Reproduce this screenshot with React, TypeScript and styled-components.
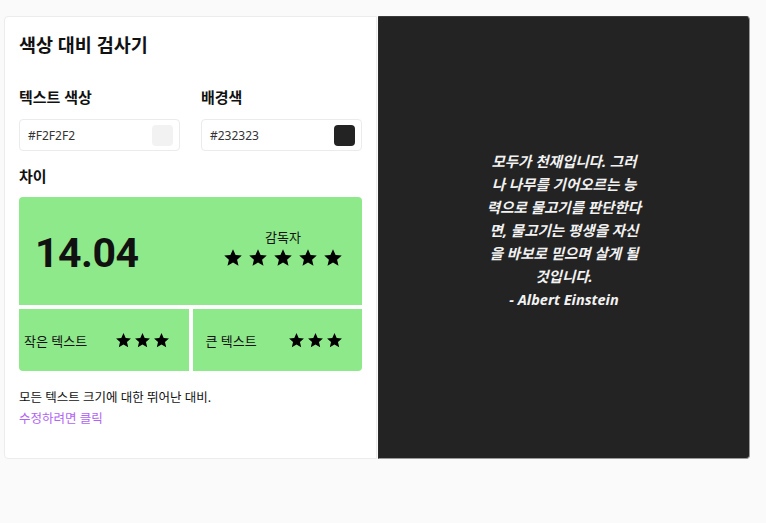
import styled, { createGlobalStyle } from "styled-components";

const GlobalStyle = createGlobalStyle`
  html, body {
    margin: 0;
    padding: 0;
    background: #fafafa;
    font-family: "Noto Sans", "Noto Sans CJK KR", sans-serif;
    color: #111;
  }
`;

const Page = styled.div`
  display: flex;
  padding: 16px 16px 0 4px;
  height: 443px;
`;

const Panel = styled.div`
  width: 373px;
  box-sizing: border-box;
  background: #fff;
  border: 1px solid #ececec;
  border-radius: 4px 0 0 4px;
  padding: 14px 14px 0 14px;
  display: flex;
  flex-direction: column;
`;

const Title = styled.h1`
  margin: 0;
  font-size: 18.5px;
  font-weight: 700;
  line-height: 28px;
`;

const Fields = styled.div`
  display: grid;
  grid-template-columns: 1fr 1fr;
  column-gap: 21px;
  margin-top: 28px;
`;

const Field = styled.div`
  display: flex;
  flex-direction: column;
`;

const Label = styled.div`
  font-size: 15px;
  font-weight: 600;
  line-height: 20px;
  margin-bottom: 12px;
`;

const InputBox = styled.div`
  height: 32px;
  box-sizing: border-box;
  border: 1px solid #ebebeb;
  border-radius: 4px;
  display: flex;
  align-items: center;
  justify-content: space-between;
  padding: 0 6px 0 8px;
  font-size: 12px;
  color: #333;
`;

const Swatch = styled.div<{ $color: string }>`
  width: 21px;
  height: 21px;
  border-radius: 4px;
  background: ${(p) => p.$color};
`;

const SectionLabel = styled(Label)`
  margin: 15px 0 11px;
`;

const Result = styled.div`
  display: grid;
  grid-template-columns: 1fr 1fr;
  gap: 4px;
  border-radius: 4px;
  overflow: hidden;
`;

const Cell = styled.div<{ $wide?: boolean }>`
  background: #8ee98b;
  display: flex;
  align-items: center;
  justify-content: space-between;
  grid-column: ${(p) => (p.$wide ? "1 / span 2" : "auto")};
  height: ${(p) => (p.$wide ? "108px" : "62px")};
  padding: ${(p) => (p.$wide ? "0 19px 0 16px" : "0 19px 0 5px")};
  box-sizing: border-box;
`;

const Ratio = styled.div`
  font-family: Roboto, "Noto Sans", sans-serif;
  font-size: 41px;
  font-weight: 700;
  letter-spacing: -0.5px;
  margin-top: 4px;
`;

const Grade = styled.div`
  display: flex;
  flex-direction: column;
  align-items: center;
  gap: 2px;
  margin-top: -8px;
  font-size: 13px;
`;

const Small = styled.span<{ $indent?: number }>`
  font-size: 13px;
  margin-left: ${(p) => p.$indent ?? 0}px;
`;

const Stars = styled.div<{ $gap: number }>`
  display: flex;
  gap: ${(p) => p.$gap}px;
`;

const Note = styled.div`
  margin-top: 16px;
  font-size: 12.5px;
  line-height: 22px;
`;

const Link = styled.div`
  font-size: 12.5px;
  color: #b163f5;
  line-height: 20px;
  cursor: pointer;
`;

const Preview = styled.div`
  flex: 1;
  background: #232323;
  border-radius: 0 4px 4px 0;
  border: 1px solid #9a9a9a;
  border-top-color: #3a3a3a;
  border-left-color: #2a2a2a;
  display: flex;
  align-items: center;
  justify-content: center;
  margin-left: 1px;
`;

const Quote = styled.p`
  width: 158px;
  margin: 0 0 15px;
  color: #f2f2f2;
  font-size: 14.5px;
  font-style: italic;
  font-weight: 700;
  line-height: 23px;
  text-align: center;
  word-break: break-all;
`;

const Star = ({ size = 18 }: { size?: number }) => (
  <svg width={size} height={size} viewBox="0 0 24 24">
    <path
      d="M12 1.5l3.1 7 7.4.6-5.6 4.9 1.7 7.4L12 17.5l-6.6 3.9 1.7-7.4L1.5 9.1l7.4-.6z"
      fill="#000"
    />
  </svg>
);

const StarRow = ({ count, size, gap }: { count: number; size: number; gap: number }) => (
  <Stars $gap={gap}>
    {Array.from({ length: count }).map((_, i) => (
      <Star key={i} size={size} />
    ))}
  </Stars>
);

export default function App() {
  return (
    <>
      <GlobalStyle />
      <Page>
        <Panel>
          <Title>색상 대비 검사기</Title>
          <Fields>
            <Field>
              <Label>텍스트 색상</Label>
              <InputBox>
                #F2F2F2
                <Swatch $color="#f2f2f2" />
              </InputBox>
            </Field>
            <Field>
              <Label>배경색</Label>
              <InputBox>
                #232323
                <Swatch $color="#232323" />
              </InputBox>
            </Field>
          </Fields>
          <SectionLabel>차이</SectionLabel>
          <Result>
            <Cell $wide>
              <Ratio>14.04</Ratio>
              <Grade>
                감독자
                <StarRow count={5} size={20} gap={5} />
              </Grade>
            </Cell>
            <Cell>
              <Small>작은 텍스트</Small>
              <StarRow count={3} size={17} gap={2} />
            </Cell>
            <Cell>
              <Small $indent={8}>큰 텍스트</Small>
              <StarRow count={3} size={17} gap={2} />
            </Cell>
          </Result>
          <Note>모든 텍스트 크기에 대한 뛰어난 대비.</Note>
          <Link>수정하려면 클릭</Link>
        </Panel>
        <Preview>
          <Quote>
            모두가 천재입니다. 그러나 나무를 기어오르는 능력으로 물고기를 판단한다면, 물고기는 평생을 자신을 바보로 믿으며 살게 될 것입니다.
            <br />- Albert Einstein
          </Quote>
        </Preview>
      </Page>
    </>
  );
}
